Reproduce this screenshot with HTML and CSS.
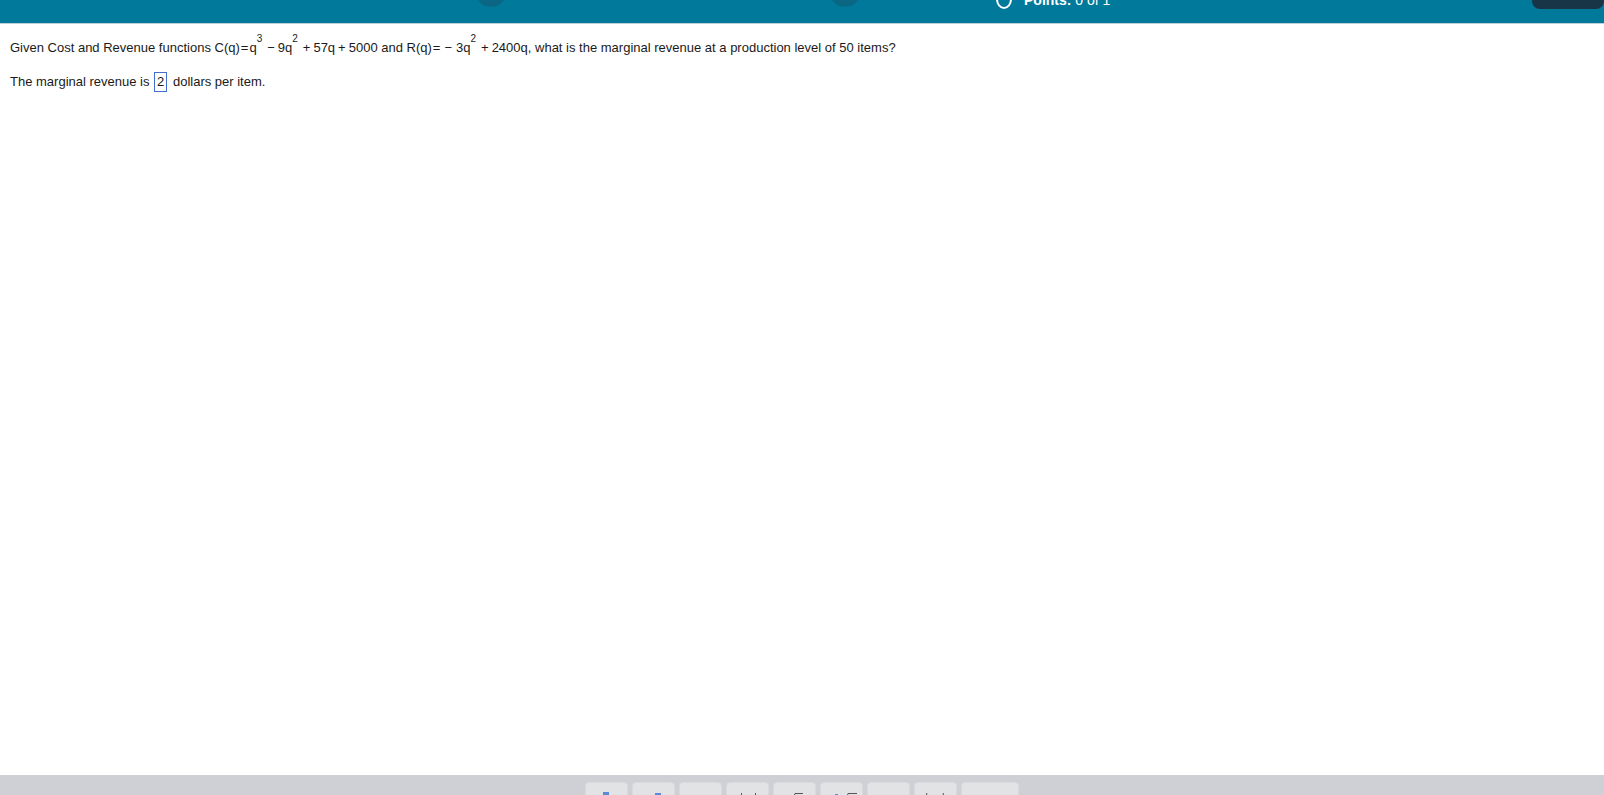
FILE: index.html
```html
<!DOCTYPE html>
<html>
<head>
    <title>Question</title>
    <link rel="stylesheet" href="styles.css">
</head>
<body>
    <div class="page">
        <div class="topbar">
            <span class="step-dot step-one"></span>
            <span class="step-dot step-two"></span>
            <div class="points">
                <span class="points-ring"></span>
                <span class="points-text"><b>Points:</b> 0 of 1</span>
            </div>
            <span class="top-button"></span>
        </div>

        <div class="question">
            <p>Given Cost and Revenue functions <span class="math">C(q)<span class="rel">=</span>q<sup>3</sup><span class="bin">&minus;</span>9q<sup>2</sup><span class="bin">+</span>57q<span class="bin">+</span>5000</span> and <span class="math">R(q)<span class="rel">=</span><span class="neg">&minus;</span>3q<sup>2</sup><span class="bin">+</span>2400q</span>, what is the marginal revenue at a production level of 50 items?</p>
            <p>The marginal revenue is <span class="answer">2</span> dollars per item.</p>
        </div>

        <div class="toolbar">
            <!-- fraction -->
            <span class="tool"><svg width="43" height="24"><rect x="18" y="10" width="6" height="6" fill="#5b8ad8"/><rect x="16" y="17" width="10" height="1" fill="#444"/></svg></span>
            <!-- mixed number -->
            <span class="tool"><svg width="43" height="24"><rect x="23" y="11" width="6" height="6" fill="#5b8ad8"/><rect x="13" y="14" width="7" height="8" fill="#888"/></svg></span>
            <!-- exponent -->
            <span class="tool"><svg width="43" height="24"><rect x="14" y="15" width="8" height="8" fill="#888"/><rect x="24" y="13" width="5" height="5" fill="#5b8ad8"/></svg></span>
            <!-- absolute value -->
            <span class="tool"><svg width="43" height="24"><rect x="15" y="11" width="1" height="12" fill="#555"/><rect x="29" y="11" width="1" height="12" fill="#555"/></svg></span>
            <!-- square root -->
            <span class="tool"><svg width="43" height="24"><path d="M17 17 L19 22 L22 11.5 H30" fill="none" stroke="#555" stroke-width="1"/></svg></span>
            <!-- nth root -->
            <span class="tool"><svg width="43" height="24"><rect x="15" y="12" width="3" height="4" fill="#5b8ad8"/><path d="M23 17 L25 22 L28 11.5 H37" fill="none" stroke="#555" stroke-width="1"/></svg></span>
            <!-- subscript -->
            <span class="tool"><svg width="44" height="24"><rect x="14" y="14" width="8" height="8" fill="#888"/></svg></span>
            <!-- parentheses -->
            <span class="tool"><svg width="43" height="24"><path d="M13 11 Q10 16 13 22" fill="none" stroke="#555"/><path d="M29 11 Q32 16 29 22" fill="none" stroke="#555"/></svg></span>
            <!-- more -->
            <span class="tool tool-wide"></span>
        </div>
    </div>
</body>
</html>
```

FILE: styles.css
```css
html, body {
    margin: 0;
    padding: 0;
    height: 100%;
    overflow: hidden;
    background-color: #ffffff;
}
.page {
    height: 100vh;
    display: flex;
    flex-direction: column;
    font-family: "Liberation Sans", Arial, sans-serif;
    color: #1a1a1a;
}
/* top bar, scrolled mostly out of view */
.topbar {
    flex: none;
    height: 23px;
    background-color: #00799b;
    border-bottom: 1px solid #bccfdb;
    display: flex;
    align-items: flex-end;
    overflow: hidden;
}
.step-dot {
    flex: none;
    width: 30px;
    height: 30px;
    border-radius: 50%;
    background-color: #0b6683;
    margin-bottom: 16px;
}
.step-one {
    margin-left: 476px;
}
.step-two {
    margin-left: 324px;
}
.points {
    flex: none;
    display: flex;
    align-items: flex-end;
    gap: 12px;
    margin-left: 136px;
    margin-bottom: 15px;
    color: #ffffff;
    font-size: 14px;
    line-height: 14px;
}
.points-ring {
    width: 12px;
    height: 16px;
    border: 2px solid #ffffff;
    border-radius: 50%;
    margin-bottom: -1px;
}
.points-text {
    display: block;
    margin-bottom: 1px;
}
.top-button {
    flex: none;
    width: 72px;
    height: 40px;
    margin-left: auto;
    margin-bottom: 14px;
    border-radius: 8px;
    background-color: #183447;
}
/* question text */
.question {
    flex: 1;
    padding: 15px 10px 0;
    font-size: 13px;
}
.question p {
    margin: 0 0 16px;
    line-height: 16px;
}
.math {
    white-space: nowrap;
}
.math sup {
    font-size: 10px;
    line-height: 0;
    vertical-align: 10px;
    margin-left: 0;
    margin-right: 2px;
}
.rel {
    margin: 0 1px;
}
.bin {
    margin: 0 3px;
}
.neg {
    margin: 0 4px 0 3px;
}
.answer {
    display: inline-block;
    padding: 2px 2px 2px;
    line-height: 14px;
    border: 1px solid #3f6fcf;
    margin: 0 2px 0 1px;
}
/* math palette at the bottom */
.toolbar {
    flex: none;
    height: 20px;
    box-sizing: border-box;
    padding-top: 7px;
    background-color: #cfd0d5;
    display: flex;
    justify-content: center;
    gap: 4px;
    overflow: hidden;
}
.tool {
    flex: none;
    display: block;
    width: 43px;
    height: 30px;
    box-sizing: border-box;
    background-color: #e2e3e5;
    border: 1px solid #d9dadd;
    border-radius: 4px 4px 0 0;
    overflow: hidden;
}
.tool svg {
    display: block;
    margin: -1px 0 0 -1px;
}
.tool-wide {
    width: 58px;
}
```
